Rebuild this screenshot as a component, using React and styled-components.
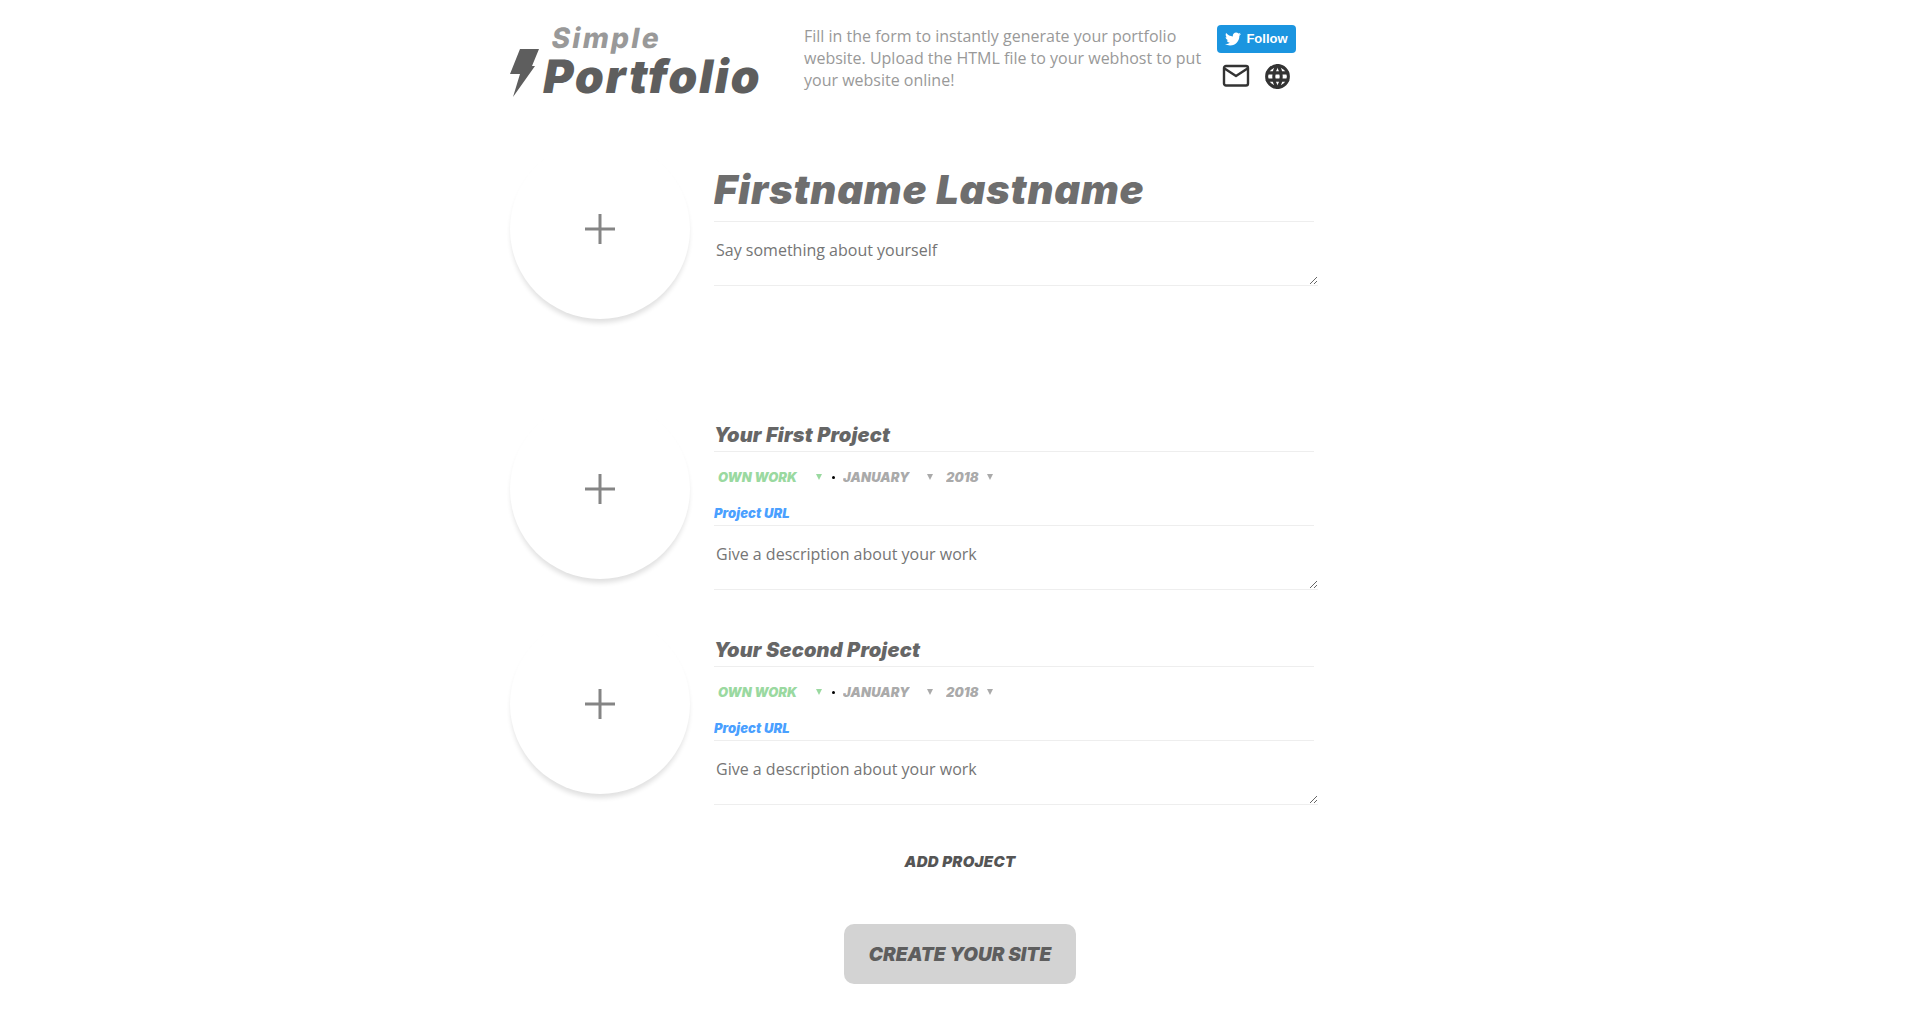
import React from "react";
import styled, { createGlobalStyle } from "styled-components";
import { FaTwitter } from "react-icons/fa";
import { TbWorld } from "react-icons/tb";

const display = `Inter, "Liberation Sans", sans-serif`;
const body = `"Open Sans", "Liberation Sans", sans-serif`;

const GlobalStyle = createGlobalStyle`
    html, body {
        margin: 0;
        background: #fff;
    }
    * {
        box-sizing: border-box;
    }
`;

const Page = styled.div`
    width: 900px;
    margin: 0 auto;
    height: 1024px;
    padding-top: 20px;
`;

const Header = styled.header`
    display: flex;
    height: 119px;
`;

const Logo = styled.div`
    width: 294px;
    height: 80px;
    display: flex;
    align-items: flex-end;
`;

const LogoTitles = styled.div`
    margin: 0 0 1px 4px;
    display: flex;
    flex-direction: column;
    align-items: flex-start;
`;

const LogoSmall = styled.div`
    font: 800 28px/30px ${display};
    letter-spacing: 2.4px;
    color: #999;
    margin-left: 8px;
    transform: skewX(-10deg);
`;

const LogoBig = styled.div`
    font: 900 46px/46px ${display};
    letter-spacing: 2.1px;
    color: #5e5e5e;
    transform: skewX(-10deg);
`;

const Intro = styled.p`
    margin: 5px 0 0;
    width: 408px;
    font: 400 16px/22px ${body};
    color: #999;
`;

const Social = styled.div`
    margin-left: 5px;
    padding-top: 5px;
    width: 80px;
`;

const FollowButton = styled.a`
    width: 79px;
    height: 28px;
    border-radius: 4px;
    background: #1b95e0;
    color: #fff;
    display: flex;
    align-items: center;
    justify-content: center;
    gap: 5px;
    font: 700 13px/28px "Liberation Sans", sans-serif;
`;

const SocialIcons = styled.div`
    display: flex;
    align-items: center;
    gap: 12px;
    margin: 8px 0 0 4px;
    color: #333;
`;

const MailIcon = styled.svg`
    width: 30px;
    height: 30px;
    fill: none;
    stroke: currentColor;
    stroke-width: 2.4;
    stroke-linejoin: round;
`;

const Row = styled.section`
    display: grid;
    grid-template-columns: 180px 604px;
    gap: 24px;
    align-items: start;
    margin-bottom: ${(props) => props.$gap}px;
`;

const Avatar = styled.div`
    width: 180px;
    height: 180px;
    border-radius: 50%;
    background: #fff;
    box-shadow: 0 5px 5px -1px rgba(0, 0, 0, 0.12);
    display: flex;
    align-items: center;
    justify-content: center;
`;

const Plus = styled.svg`
    width: 32px;
    height: 32px;
    stroke: #858585;
    stroke-width: 3;
`;

const Fields = styled.div`
    display: flex;
    flex-direction: column;
    padding-top: ${(props) => props.$top}px;
`;

const NameInput = styled.input`
    width: 600px;
    height: 83px;
    padding: 19px 0 1px;
    border: 0;
    border-bottom: 1px solid #eee;
    outline: 0;
    background: none;
    font: italic 900 40px/60px ${display};
    letter-spacing: 0.85px;
    &::placeholder {
        color: #6e6e6e;
        opacity: 1;
    }
`;

const ProjectInput = styled.input`
    width: 600px;
    height: 32px;
    padding: 0 0 2px;
    border: 0;
    border-bottom: 1px solid #eee;
    outline: 0;
    background: none;
    font: italic 900 20px/28px ${display};
    letter-spacing: 0.2px;
    &::placeholder {
        color: #666;
        opacity: 1;
    }
`;

const TextArea = styled.textarea`
    display: block;
    width: 604px;
    height: 64px;
    padding: 17px 2px 0;
    border: 0;
    border-bottom: 1px solid #eee;
    outline: 0;
    background: none;
    font: 400 16px/22px ${body};
    &::placeholder {
        color: #757575;
        opacity: 1;
    }
`;

const Meta = styled.div`
    display: flex;
    align-items: center;
    height: 46px;
    padding: 4px 0 0 4px;
`;

const SelectBox = styled.div`
    width: ${(props) => props.$width}px;
    margin-left: ${(props) => props.$left || 0}px;
    display: flex;
    align-items: center;
    justify-content: space-between;
    &::after {
        content: "";
        border-left: 3.5px solid transparent;
        border-right: 3.5px solid transparent;
        border-top: 6px solid ${(props) => props.$color};
    }
`;

const Select = styled.select`
    appearance: none;
    border: 0;
    outline: 0;
    padding: 0;
    background: none;
    font: italic 900 13px/18px ${display};
    letter-spacing: 0.1px;
    color: ${(props) => props.$color};
`;

const Dot = styled.span`
    width: 3px;
    height: 3px;
    border-radius: 50%;
    background: #000;
    margin: 0 8px 0 10px;
`;

const UrlInput = styled.input`
    width: 600px;
    height: 22px;
    margin-top: 6px;
    padding: 0 0 3px;
    border: 0;
    border-bottom: 1px solid #eee;
    outline: 0;
    background: none;
    font: italic 900 13px/18px ${display};
    letter-spacing: 0.1px;
    &::placeholder {
        color: #4aa0ff;
        opacity: 1;
    }
`;

const AddProject = styled.a`
    display: block;
    margin-top: 47px;
    text-align: center;
    font: italic 900 15px/20px ${display};
    letter-spacing: 0.3px;
    color: #555;
`;

const CreateButton = styled.button`
    display: block;
    width: 232px;
    height: 60px;
    margin: 52px auto 0;
    border: 0;
    border-radius: 10px;
    background: #d3d3d3;
    color: #5e5e5e;
    font: italic 900 19px/60px ${display};
    letter-spacing: 0;
`;

const Bolt = styled.svg`
    width: 30px;
    height: 48px;
    flex: none;
    margin-bottom: 3px;
    fill: #5e5e5e;
`;

function Project({ title }) {
    return (
        <Row $gap={24}>
            <Avatar>
                <Plus viewBox="0 0 32 32"><path d="M16 1v30M1 16h30" /></Plus>
            </Avatar>
            <Fields $top={21}>
                <ProjectInput placeholder={title} />
                <Meta>
                    <SelectBox $width={104} $color="#9ad9a0">
                        <Select $color="#9ad9a0"><option>OWN WORK</option></Select>
                    </SelectBox>
                    <Dot />
                    <SelectBox $width={90} $color="#aaa">
                        <Select $color="#aaa"><option>JANUARY</option></Select>
                    </SelectBox>
                    <SelectBox $width={47} $left={13} $color="#aaa">
                        <Select $color="#aaa"><option>2018</option></Select>
                    </SelectBox>
                </Meta>
                <UrlInput placeholder="Project URL" />
                <TextArea placeholder="Give a description about your work" />
            </Fields>
        </Row>
    );
}

export default function App() {
    return (
        <Page>
            <GlobalStyle />
            <Header>
                <Logo>
                    <Bolt viewBox="0 0 30 48"><path d="M10 0h19l-7 17h3L3 48l7-23H0z" /></Bolt>
                    <LogoTitles>
                        <LogoSmall>Simple</LogoSmall>
                        <LogoBig>Portfolio</LogoBig>
                    </LogoTitles>
                </Logo>
                <Intro>Fill in the form to instantly generate your portfolio website. Upload the HTML file to your webhost to put your website online!</Intro>
                <Social>
                    <FollowButton><FaTwitter size={16} />Follow</FollowButton>
                    <SocialIcons>
                        <MailIcon viewBox="0 0 30 30">
                            <rect x="3" y="5" width="24" height="19.5" rx="2" />
                            <path d="M3.5 7.5L15 15l11.5-7.5" />
                        </MailIcon>
                        <TbWorld size={29} strokeWidth={2.5} />
                    </SocialIcons>
                </Social>
            </Header>
            <Row $gap={80}>
                <Avatar>
                    <Plus viewBox="0 0 32 32"><path d="M16 1v30M1 16h30" /></Plus>
                </Avatar>
                <Fields $top={0}>
                    <NameInput placeholder="Firstname Lastname" />
                    <TextArea placeholder="Say something about yourself" />
                </Fields>
            </Row>
            <Project title="Your First Project" />
            <Project title="Your Second Project" />
            <AddProject>ADD PROJECT</AddProject>
            <CreateButton>CREATE YOUR SITE</CreateButton>
        </Page>
    );
}
